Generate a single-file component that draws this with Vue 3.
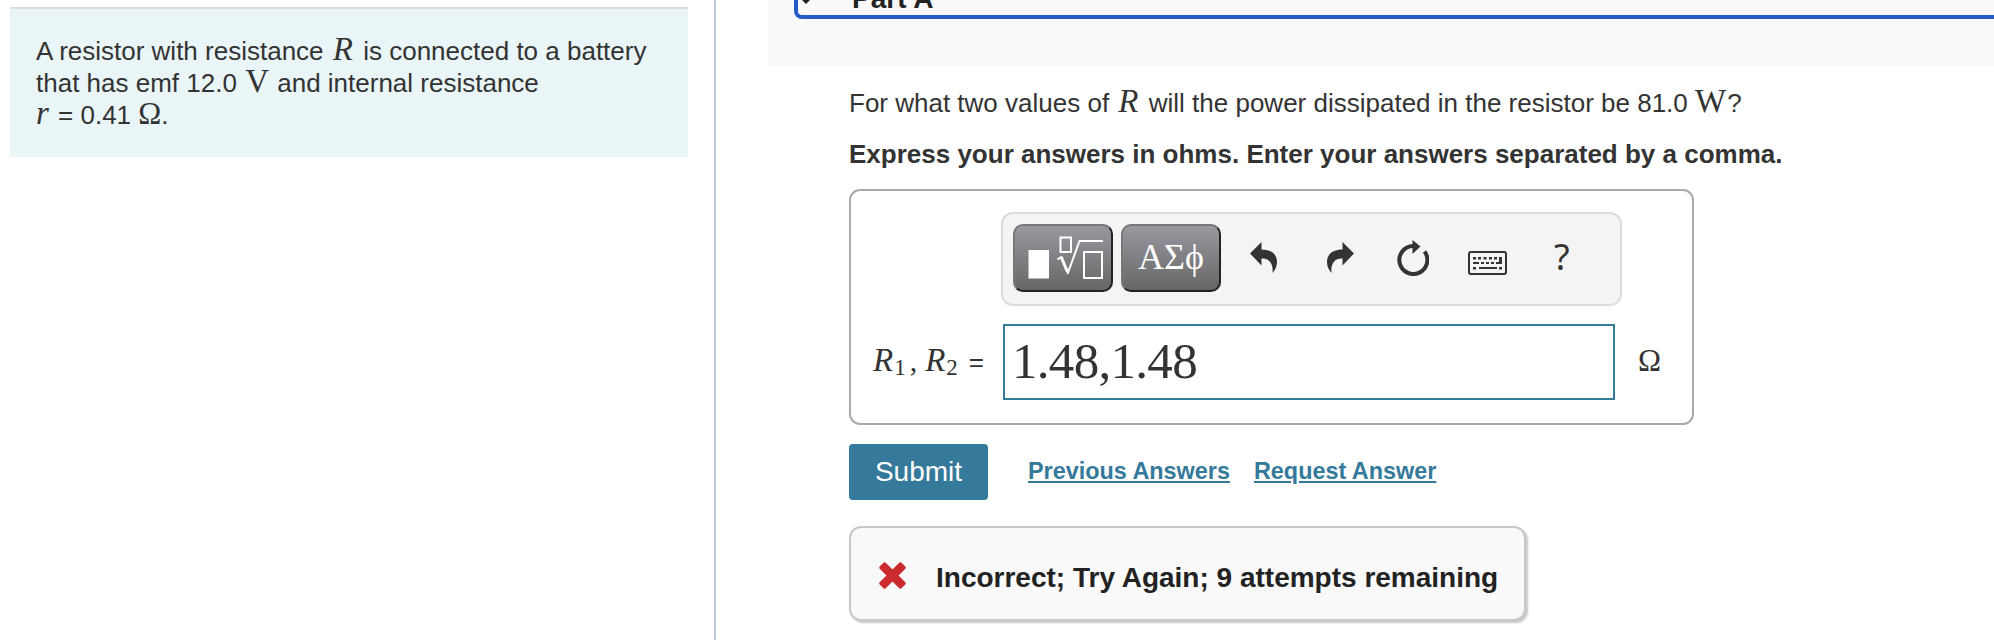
<script setup>
    import { ref } from 'vue';

    // 学生输入的答案
    const answer = ref('1.48,1.48');

    // 剩余尝试次数
    const attemptsLeft = ref(9);

    const links = ['Previous Answers', 'Request Answer'];

    // 键盘图标按键 [x, y, 宽, 高]
    const keys = [
        [5, 6, 3, 2.5],
        [10, 6, 3, 2.5],
        [15.5, 6, 3, 2.5],
        [21, 6, 3, 2.5],
        [26, 6, 3, 2.5],
        [31, 6, 3, 7],
        [5, 11, 6, 2],
        [13, 11, 3, 2],
        [18, 11, 3, 2],
        [23, 11, 3, 2],
        [28, 11, 6, 2],
        [5, 16, 3, 2.5],
        [11, 16, 18, 2],
        [31, 16, 3, 2.5],
    ];
</script>

<template>
    <div class="page">
        <!-- 题干 -->
        <aside class="sidebar">
            <div class="problem">
                <div class="line">
                    A resistor with resistance <i class="math big-r">R</i> is
                    connected to a battery
                </div>
                <div class="line">
                    that has emf 12.0 <span class="math volt">V</span> and
                    internal resistance
                </div>
                <div class="line">
                    <i class="math small-r">r</i> = 0.41
                    <span class="math omega">Ω</span>.
                </div>
            </div>
        </aside>

        <main class="content">
            <header class="part-header">
                <div class="part-toggle">
                    <svg class="caret" viewBox="0 0 12 10">
                        <path d="M0 4 6 10 12 4V0H0z" />
                    </svg>
                    <span class="part-title">Part A</span>
                </div>
            </header>

            <section class="part-body">
                <p class="question">
                    For what two values of <i class="math big-r">R</i> will the
                    power dissipated in the resistor be 81.0
                    <span class="math watt">W</span>?
                </p>
                <p class="instruction">
                    Express your answers in ohms. Enter your answers separated
                    by a comma.
                </p>

                <!-- 答题区 -->
                <div class="answer-box">
                    <div class="toolbar">
                        <button class="tool-button template">
                            <svg class="template-icon" viewBox="0 0 78 46">
                                <rect x="1.500" y="15" width="20.500" height="28.500" fill="#fff" />
                                <g fill="none" stroke="#fff" stroke-width="2">
                                    <rect x="33.500" y="2.500" width="10.500" height="14.500" />
                                    <rect x="57" y="17" width="18" height="26" />
                                    <path d="M30.500 24.500 34 22" />
                                    <path d="M34 21.500 40.500 37" stroke-width="3" />
                                    <path d="M40.500 39 52.500 6H76" />
                                </g>
                            </svg>
                        </button>
                        <button class="tool-button greek">ΑΣϕ</button>
                        <svg class="tool undo" viewBox="0 0 27 31">
                            <path d="M0 11.500 11.500 0V7.500C21 7.500 27 12 27 20 27 24.500 25 28.500 22.500 31 23.500 22 19.500 16 11.500 16.500V23.500z" />
                        </svg>
                        <svg class="tool redo" viewBox="0 0 27 31">
                            <path d="M27 11.500 15.500 0V7.500C6 7.500 0 12 0 20 0 24.500 2 28.500 4.500 31 3.500 22 7.500 16 15.500 16.500V23.500z" />
                        </svg>
                        <svg class="tool reset" viewBox="0 0 32 36">
                            <path d="M16 6A14 14 0 1 0 27.500 11.500" fill="none" stroke="#333" stroke-width="4" />
                            <path d="M15.500 0 23.500 6.500 15.500 14z" />
                        </svg>
                        <svg class="tool keyboard" viewBox="0 0 39 24">
                            <rect x="1" y="1" width="37" height="22" rx="2" fill="none" stroke="#333" stroke-width="2" />
                            <rect
                                v-for="(k, i) in keys"
                                :key="i"
                                :x="k[0]"
                                :y="k[1]"
                                :width="k[2]"
                                :height="k[3]"
                            />
                        </svg>
                        <span class="help">?</span>
                    </div>
                    <div class="answer-row">
                        <div class="label">
                            <i class="math">R</i><sub>1</sub
                            ><span class="math comma">,</span
                            ><i class="math">R</i><sub>2</sub
                            ><span class="equals">=</span>
                        </div>
                        <div class="field">{{ answer }}</div>
                        <div class="unit">Ω</div>
                    </div>
                </div>

                <div class="actions">
                    <button class="submit">Submit</button>
                    <a v-for="link in links" :key="link" class="link">{{ link }}</a>
                </div>

                <!-- 反馈 -->
                <div class="feedback">
                    <svg class="cross" viewBox="-13.500 -13.500 27 27">
                        <g transform="rotate(45)">
                            <rect x="-15.500" y="-4.300" width="31" height="8.600" rx="2" />
                            <rect x="-4.300" y="-15.500" width="8.600" height="31" rx="2" />
                        </g>
                    </svg>
                    <span class="feedback-text">Incorrect; Try Again; {{ attemptsLeft }} attempts
                        remaining</span>
                </div>
            </section>
        </main>
    </div>
</template>

<style>
    body {
        margin: 0;
        overflow: hidden;
        background: #fff;
    }
</style>

<style scoped>
    .page {
        display: flex;
        height: 640px;
        overflow: hidden;
        color: #333;
        font-family: 'Liberation Sans', Arial, sans-serif;
        font-size: 26px;
        line-height: 32px;
    }

    .page * {
        box-sizing: border-box;
    }

    .sidebar {
        flex: none;
        width: 716px;
        padding: 7px 26px 0 10px;
        border-right: 2px solid #bccbdf;
    }

    .problem {
        height: 150px;
        padding: 26px;
        border-top: 2px solid #dcdee0;
        background: #eaf5f7;
    }

    .line {
        white-space: nowrap;
    }

    .math {
        font-family: 'Liberation Serif', 'Times New Roman', serif;
        font-size: 33px;
        line-height: 0;
    }

    .big-r {
        margin: 0 3px 0 2px;
    }

    .volt {
        margin: 0 1px;
    }

    .small-r {
        margin-right: 2px;
    }

    .omega {
        font-size: 31px;
    }

    .watt {
        margin-right: 1px;
    }

    .content {
        flex: 1;
        min-width: 0;
        padding-left: 52px;
    }

    .part-header {
        height: 66px;
        padding-left: 26px;
        background: #f9f9f9;
    }

    .part-toggle {
        display: flex;
        align-items: flex-start;
        height: 19px;
        overflow: hidden;
        border: 4px solid #235cc6;
        border-width: 0 0 4px 4px;
        border-bottom-left-radius: 8px;
    }

    .caret {
        width: 12px;
        height: 10px;
        margin: -6px 0 0 2px;
        fill: #222;
    }

    .part-title {
        margin: -17px 0 0 40px;
        color: #222;
        font-size: 28px;
        font-weight: bold;
    }

    .part-body {
        padding: 21px 0 0 81px;
    }

    .question,
    .instruction {
        margin: 0;
        white-space: nowrap;
    }

    .instruction {
        margin-top: 19px;
        font-weight: bold;
    }

    .answer-box {
        width: 845px;
        height: 236px;
        margin-top: 19px;
        padding: 21px 0 0 20px;
        border: 2px solid #aaa;
        border-radius: 11px;
    }

    .toolbar {
        display: flex;
        align-items: flex-start;
        width: 621px;
        height: 94px;
        margin-left: 130px;
        padding: 10px 0 0 10px;
        border: 2px solid #dcdcdc;
        border-radius: 12px;
        background: #f4f4f4;
    }

    .tool-button {
        width: 100px;
        height: 68px;
        margin: 0 8px 0 0;
        padding: 0;
        border: 2px solid;
        border-color: #777 #222 #222 #777;
        border-radius: 10px;
        background: linear-gradient(#9a98a0, #666);
        color: #fff;
    }

    .template {
        display: flex;
        align-items: flex-start;
    }

    .template-icon {
        width: 78px;
        height: 46px;
        margin: 9px 0 0 12px;
    }

    .greek {
        padding-bottom: 3px;
        font-family: 'Liberation Serif', serif;
        font-size: 36px;
        line-height: 60px;
    }

    .tool {
        flex: none;
        fill: #333;
    }

    .undo {
        width: 27px;
        height: 31px;
        margin: 18px 0 0 21px;
    }

    .redo {
        width: 27px;
        height: 31px;
        margin: 18px 0 0 50px;
    }

    .reset {
        width: 32px;
        height: 36px;
        margin: 16px 0 0 43px;
    }

    .keyboard {
        width: 39px;
        height: 24px;
        margin: 27px 0 0 39px;
    }

    .help {
        margin: 17px 0 0 47px;
        font-family: 'Noto Sans', sans-serif;
        font-size: 36px;
        line-height: 32px;
    }

    .answer-row {
        display: flex;
        margin-top: 18px;
    }

    .label {
        width: 132px;
        padding: 22px 0 0 2px;
        white-space: nowrap;
    }

    .label sub {
        position: relative;
        top: 4px;
        margin-left: 1px;
        font-family: 'Liberation Serif', serif;
        font-size: 23px;
        line-height: 0;
        vertical-align: baseline;
    }

    .comma {
        margin: 0 8px 0 4px;
        font-size: 30px;
    }

    .equals {
        margin-left: 11px;
    }

    .field {
        width: 612px;
        height: 76px;
        padding-left: 7px;
        border: 2px solid #347a9b;
        font-family: 'Liberation Serif', serif;
        font-size: 51px;
        line-height: 71px;
        letter-spacing: -0.7px;
    }

    .unit {
        padding: 21px 0 0 23px;
        font-size: 31px;
        font-family: 'Liberation Serif', serif;
    }

    .actions {
        display: flex;
        margin-top: 19px;
    }

    .submit {
        width: 139px;
        height: 56px;
        margin-right: 39px;
        padding: 0;
        border: 0;
        border-radius: 4px;
        background: #35799b;
        color: #fff;
        font-family: inherit;
        font-size: 28px;
        line-height: 56px;
    }

    .link {
        margin: 11px 23px 0 1px;
        color: #35799b;
        font-size: 23.4px;
        font-weight: bold;
        text-decoration: underline;
        text-decoration-thickness: 2px;
        text-underline-offset: 2px;
    }

    .feedback {
        display: flex;
        width: 677px;
        height: 95px;
        margin-top: 26px;
        padding: 34px 0 0 28px;
        border: 2px solid #c8c8c8;
        border-radius: 12px;
        background: #f9f9f9;
        box-shadow: 2px 2px 2px #c8c8c8;
        color: #222;
        font-size: 28px;
        font-weight: bold;
        white-space: nowrap;
    }

    .cross {
        width: 27px;
        height: 27px;
        fill: #cb2a2e;
    }

    .feedback-text {
        margin-left: 30px;
    }
</style>
